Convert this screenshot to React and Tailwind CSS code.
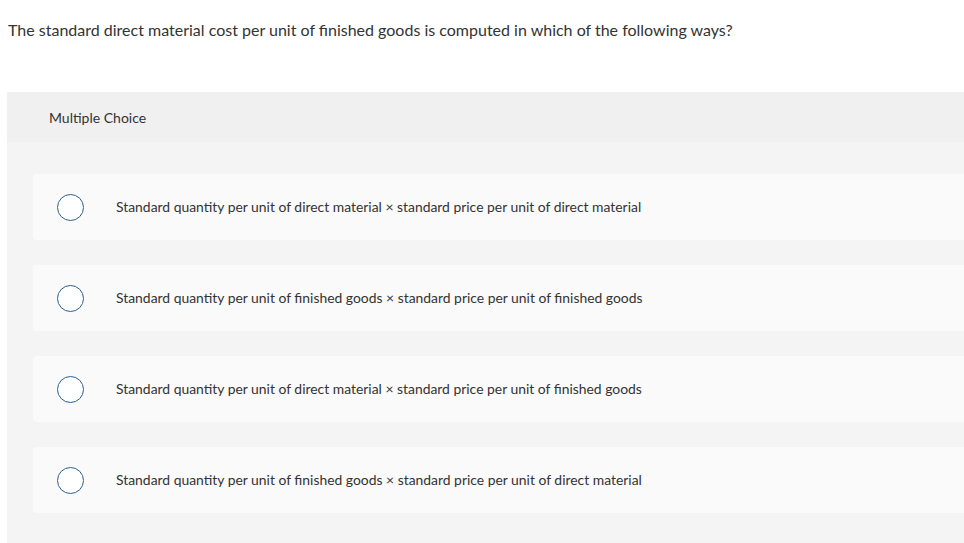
import React from "react";

const choices = [
	"Standard quantity per unit of direct material × standard price per unit of direct material",
	"Standard quantity per unit of finished goods × standard price per unit of finished goods",
	"Standard quantity per unit of direct material × standard price per unit of finished goods",
	"Standard quantity per unit of finished goods × standard price per unit of direct material",
];

export default function App() {
	return (
		<div className="min-h-[543px] bg-white font-['Lato',sans-serif] text-[#333]">
			<p className="px-2 pt-[20px] text-[16px] leading-5">
				The standard direct material cost per unit of finished goods is computed in which of the following ways?
			</p>
			<div className="mt-[52px] ml-[7px] bg-[#f4f4f4] pb-[32px]">
				<div className="h-[50px] bg-[#f0f0f0] pl-[42px] flex items-center text-[14px]">
					Multiple Choice
				</div>
				<div className="pt-[32px] pl-[26px] flex flex-col gap-[25px]">
					{choices.map((c) => (
						<div key={c} className="h-[66px] bg-[#fafafa] rounded-l-[4px] flex items-center">
							<span className="ml-[24px] w-[27px] h-[27px] rounded-full border-[1.5px] border-[#2b5f93] bg-white shrink-0" />
							<span className="ml-[32px] text-[13.9px]">{c}</span>
						</div>
					))}
				</div>
			</div>
		</div>
	);
}
